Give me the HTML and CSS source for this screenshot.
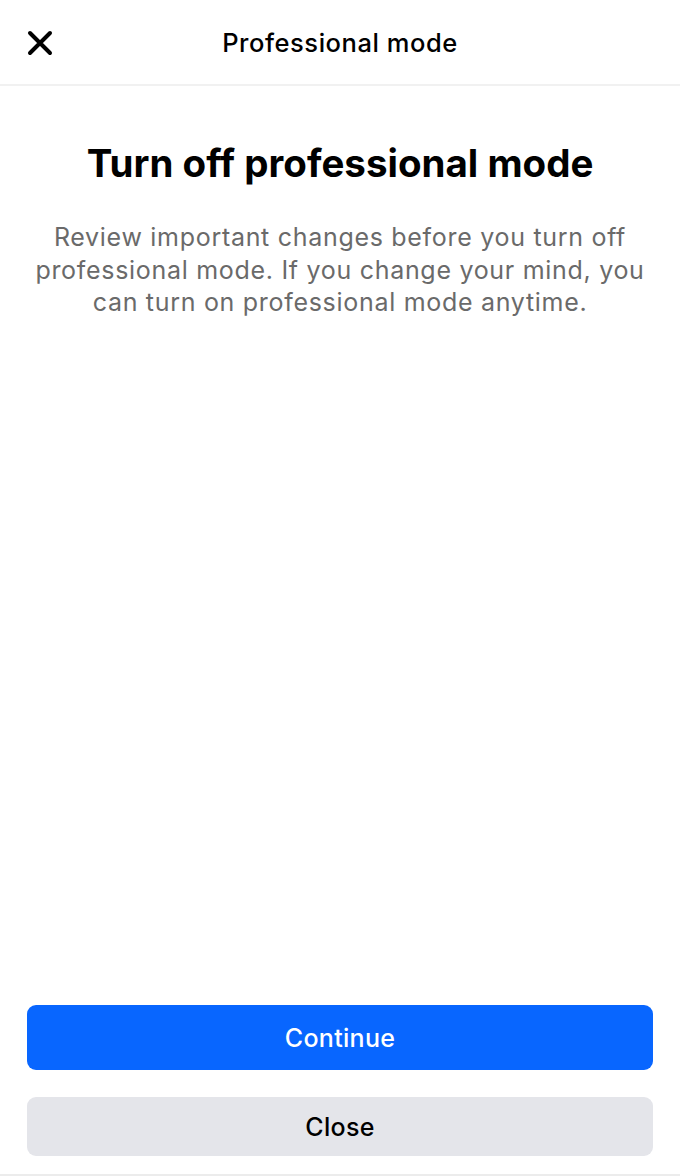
FILE: index.html
```html
<!DOCTYPE html>
<html lang="en">
<head>
<meta charset="utf-8">
<title>Professional mode</title>
<link rel="stylesheet" href="styles.css">
</head>
<body>
<div class="screen">
  <header class="topbar">
    <button class="close-icon" aria-label="Close">
      <svg width="26" height="26" viewBox="0 0 26 26"><path d="M3 3 L23 23 M23 3 L3 23" stroke="#000" stroke-width="4" stroke-linecap="round" fill="none"/></svg>
    </button>
    <h1 class="topbar-title">Professional mode</h1>
  </header>
  <main class="content">
    <h2 class="heading">Turn off professional mode</h2>
    <p class="desc">Review important changes before you turn off professional mode. If you change your mind, you can turn on professional mode anytime.</p>
  </main>
  <footer class="actions">
    <button class="btn btn-primary">Continue</button>
    <button class="btn btn-secondary">Close</button>
  </footer>
</div>
</body>
</html>
```
FILE: styles.css
```css
* { box-sizing: border-box; }
html, body { margin: 0; padding: 0; background: #fff; }
body { font-family: Inter, Roboto, "Liberation Sans", Arial, sans-serif; color: #000; }
.screen { height: 1176px; display: flex; flex-direction: column; border-bottom: 2px solid #ececec; }
.topbar { height: 86px; display: flex; align-items: center; justify-content: center; position: relative; border-bottom: 2px solid #f1f1f1; }
.close-icon { position: absolute; left: 27px; top: 30px; width: 26px; height: 26px; padding: 0; border: 0; background: none; display: flex; }
.topbar-title { margin: 0; font-size: 25.5px; font-weight: 500; letter-spacing: 0.55px; }
.content { flex: 1; padding: 54px 28px 0; text-align: center; }
.heading { margin: 0; font-size: 38.5px; font-weight: 700; line-height: 46px; }
.desc { margin: 35px 0 0; font-size: 25px; line-height: 32.5px; color: #6a6a6a; letter-spacing: 0.7px; }
.actions { display: flex; flex-direction: column; gap: 27px; padding: 0 27px 18px; }
.btn { width: 100%; border: 0; border-radius: 9px; font-family: inherit; font-size: 25px; font-weight: 500; letter-spacing: 0.3px; }
.btn-primary { height: 65px; background: #0866ff; color: #fff; }
.btn-secondary { height: 59px; background: #e4e5ea; color: #000; }
```
